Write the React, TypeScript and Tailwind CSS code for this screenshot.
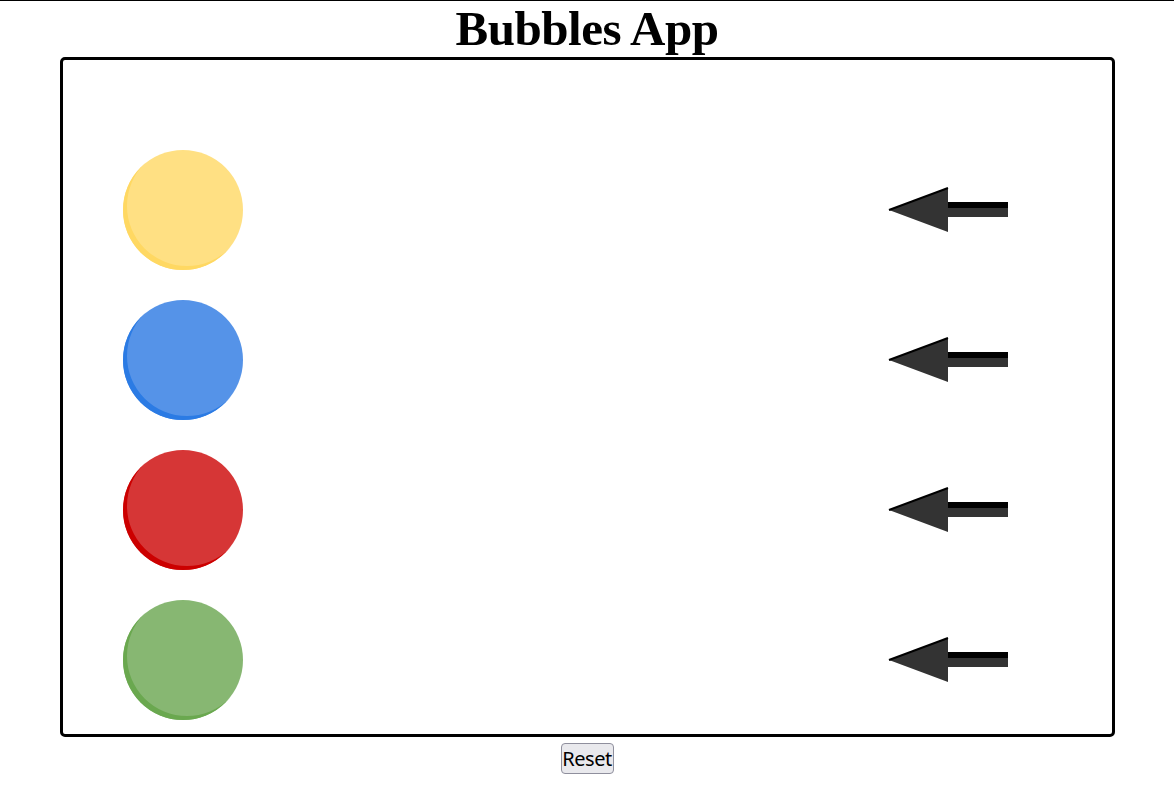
import React from "react";

const bubbles = [
  { name: "yellow", cls: "bg-[#ffe083] shadow-[inset_4px_-4px_0_#ffd862]" },
  { name: "blue", cls: "bg-[#5593e8] shadow-[inset_4px_-4px_0_#2b7be4]" },
  { name: "red", cls: "bg-[#d63636] shadow-[inset_4px_-4px_0_#cc0000]" },
  { name: "green", cls: "bg-[#87b772] shadow-[inset_4px_-4px_0_#6aa84f]" },
];

function Arrow() {
  return (
    <svg width="120" height="46" viewBox="0 0 120 46" className="block">
      <polygon points="1,23 60,1 60,15 120,15 120,30 60,30 60,45" fill="#333" />
      <rect x="60" y="15" width="60" height="6" fill="#000" />
      <polyline points="1,23 60,1" stroke="#000" strokeWidth="2" fill="none" />
    </svg>
  );
}

export default function App() {
  return (
    <div className="min-h-[801px] border-t border-black bg-white">
      <h1 className="m-0 text-center text-[49px] font-bold leading-[56px] tracking-[-0.5px] text-black [font-family:'Liberation_Serif',serif]">
        Bubbles App
      </h1>
      <div className="mx-auto box-border flex h-[680px] w-[1055px] flex-col rounded-[5px] border-[3px] border-black pt-[75px]">
        {bubbles.map((b) => (
          <div key={b.name} className="flex h-[150px] shrink-0 items-center justify-between pl-[60px] pr-[104px]">
            <div className={`h-[120px] w-[120px] rounded-full ${b.cls}`} />
            <Arrow />
          </div>
        ))}
      </div>
      <div className="mt-[6px] flex justify-center">
        <button className="h-[31px] w-[53px] rounded-[4px] border border-[#8f8f9d] bg-[#e9e9ed] p-0 text-[20px] leading-none tracking-[-0.5px] text-black [font-family:'Noto_Sans',sans-serif]">
          Reset
        </button>
      </div>
    </div>
  );
}
